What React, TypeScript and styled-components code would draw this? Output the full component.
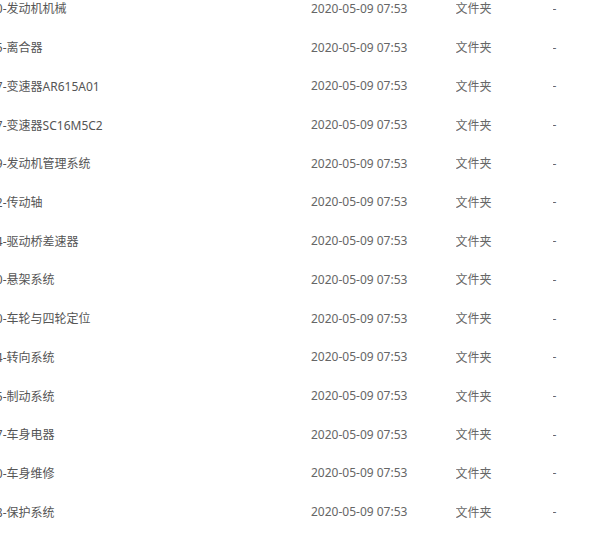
import React from "react";
import styled, { createGlobalStyle } from "styled-components";

const GlobalStyle = createGlobalStyle`
  html, body {
    margin: 0;
    padding: 0;
    background: #fff;
  }
  body {
    font-family: "Noto Sans", "Noto Sans CJK SC", sans-serif;
    font-size: 12px;
  }
`;

const Viewport = styled.div`
  width: 600px;
  height: 542px;
  overflow: hidden;
  background: #fff;
`;

const Table = styled.div`
  display: flex;
  flex-direction: column;
  margin-left: -11px;
  margin-top: -11px;
`;

const Row = styled.div`
  display: grid;
  grid-template-columns: 322px 144.5px 97px 1fr;
  align-items: center;
  height: 38.72px;
  white-space: nowrap;
`;

const Cell = styled.span<{ $strong?: boolean }>`
  color: ${(p) => (p.$strong ? "#555" : "#666")};
  font-size: 12px;
  overflow: hidden;
`;

const rows = [
  "10-发动机机械",
  "15-离合器",
  "17-变速器AR615A01",
  "17-变速器SC16M5C2",
  "19-发动机管理系统",
  "32-传动轴",
  "34-驱动桥差速器",
  "40-悬架系统",
  "40-车轮与四轮定位",
  "44-转向系统",
  "45-制动系统",
  "47-车身电器",
  "50-车身维修",
  "58-保护系统",
];

export default function App() {
  return (
    <>
      <GlobalStyle />
      <Viewport>
        <Table>
          {rows.map((name, i) => (
            <Row key={i}>
              <Cell $strong>{name}</Cell>
              <Cell>2020-05-09 07:53</Cell>
              <Cell>文件夹</Cell>
              <Cell>-</Cell>
            </Row>
          ))}
        </Table>
      </Viewport>
    </>
  );
}
